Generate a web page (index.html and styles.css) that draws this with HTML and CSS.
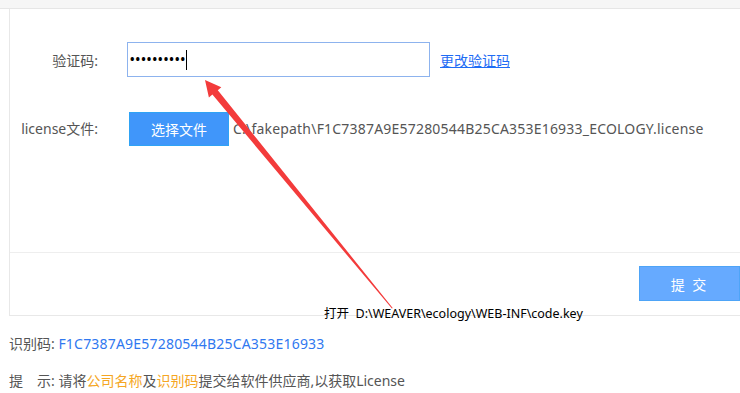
FILE: index.html
```html
<!DOCTYPE html>
<html lang="zh-CN">
<head>
  <meta charset="UTF-8" />
  <meta name="viewport" content="width=device-width, initial-scale=1.0"/>
  <title>License</title>
  <link rel="stylesheet" href="styles.css">
</head>
<body>
  <div class="topbar"></div>

  <div class="panel">
    <div class="panel-body">
      <div class="form-row">
        <label class="form-label">验证码:</label>
        <div class="code-input"><span class="dots">••••••••••</span><span class="caret"></span></div>
        <a href="#" class="change-link">更改验证码</a>
      </div>
      <div class="form-row file-row">
        <label class="form-label">license文件:</label>
        <button type="button" class="file-btn">选择文件</button>
        <span class="file-path">C:\fakepath\F1C7387A9E57280544B25CA353E16933_ECOLOGY.license</span>
      </div>
    </div>
    <div class="panel-footer">
      <button type="submit" class="submit-btn">提 交</button>
    </div>
  </div>

  <div class="info">
    <p>识别码: <span class="code">F1C7387A9E57280544B25CA353E16933</span></p>
    <p class="tip">提&emsp;示: 请将<span class="hl">公司名称</span>及<span class="hl">识别码</span>提交给软件供应商,以获取License</p>
  </div>

  <!-- annotation -->
  <svg class="arrow" width="740" height="393" viewBox="0 0 740 393">
    <polygon points="205,80 221.3,87.3 217.8,90.2 392.7,307.9 391.9,308.6 212.4,94.6 208.9,97.5" fill="#f33b3b"/>
  </svg>
  <div class="note">打开&nbsp;&nbsp;D:\WEAVER\ecology\WEB-INF\code.key</div>
</body>
</html>
```

FILE: styles.css
```css
body {
  font-family: "Noto Sans", "Noto Sans CJK SC", sans-serif;
  font-size: 14px;
  margin: 0;
  padding: 0;
  background: #fff;
  color: #555;
  position: relative;
  width: 740px;
  height: 393px;
  overflow: hidden;
}

.topbar {
  height: 8px;
  background: #f6f6f6;
  border-bottom: 1px solid #e6e6e6;
}

.panel {
  margin-left: 9px;
  border-left: 1px solid #e8e8e8;
  border-bottom: 1px solid #e8e8e8;
}

.panel-body {
  height: 244px;
  box-sizing: border-box;
  padding-top: 33px;
  border-bottom: 1px solid #eeeeee;
}

.form-row {
  display: flex;
  align-items: center;
  height: 35px;
}

.file-row {
  margin-top: 35px;
  height: 34px;
}

.file-row .form-label,
.file-row .file-path {
  margin-bottom: 2px;
}

.form-label {
  width: 88px;
  margin-right: 29px;
  text-align: right;
  color: #555;
  white-space: nowrap;
}

.code-input {
  width: 303px;
  height: 35px;
  box-sizing: border-box;
  border: 1px solid #8db3ee;
  display: flex;
  align-items: center;
  padding-left: 2px;
  color: #000;
}

.dots {
  font-size: 12px;
  letter-spacing: 1.1px;
  font-weight: bold;
}

.caret {
  display: inline-block;
  width: 1px;
  height: 20px;
  background: #000;
  margin-left: 0;
}

.change-link {
  margin-left: 10px;
  color: #1e6cf5;
  text-decoration: underline;
}

.file-btn {
  margin-left: 2px;
  width: 100px;
  height: 34px;
  background: #4096fa;
  border: 1px solid #2fa3f5;
  color: #fff;
  font-family: inherit;
  font-size: 14px;
  padding: 0;
}

.file-path {
  margin-left: 4px;
  color: #555;
  letter-spacing: 0.2px;
  white-space: nowrap;
}

.panel-footer {
  height: 62px;
  box-sizing: border-box;
  padding-top: 13px;
  text-align: right;
}

.submit-btn {
  width: 101px;
  height: 35px;
  background: #66aaff;
  border: 1px solid #4ea4f7;
  color: #fff;
  font-family: inherit;
  font-size: 14px;
  letter-spacing: 2px;
  padding: 0;
}

.info {
  padding-left: 9px;
  margin-top: 18px;
}

.info p {
  margin: 0;
  line-height: 20px;
  white-space: nowrap;
}

.info .tip {
  margin-top: 17px;
}

.code {
  color: #2f78f0;
  letter-spacing: 0.2px;
}

.hl {
  color: #f5a623;
}

.arrow {
  position: absolute;
  left: 0;
  top: 0;
  pointer-events: none;
}

.note {
  position: absolute;
  left: 324px;
  top: 305px;
  font-size: 12.5px;
  line-height: 18px;
  color: #000;
  white-space: nowrap;
}
```
